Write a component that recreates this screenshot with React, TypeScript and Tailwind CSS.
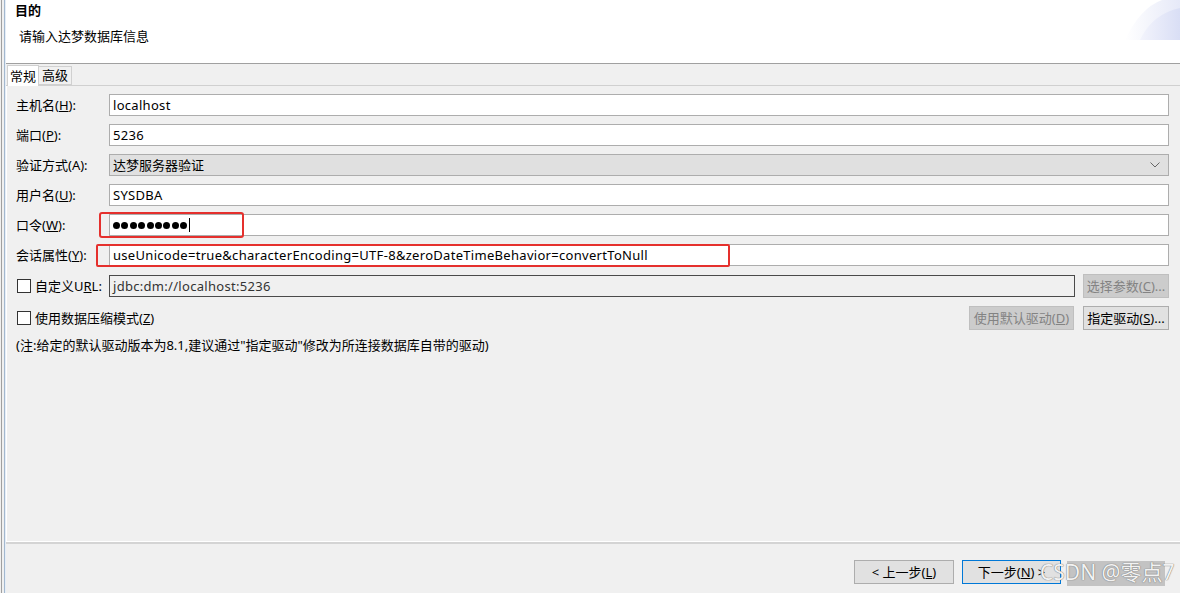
import { type ReactNode } from 'react';

function Field({ children, className = 'bg-white' }: { children?: ReactNode; className?: string }) {
    return (
        <div className={`flex h-[22px] flex-1 items-center border border-[#adadad] px-[3px] tracking-[0.3px] ${className}`}>
            {children}
        </div>
    );
}

function Row({ label, children }: { label: ReactNode; children: ReactNode }) {
    return (
        <div className="flex h-[22px] items-center">
            <div className="w-[94px] shrink-0 pl-px">{label}</div>
            {children}
        </div>
    );
}

function Checkbox() {
    return <div className="h-[14px] w-[14px] shrink-0 border border-[#333] bg-white" />;
}

export default function App() {
    return (
        <div className="relative flex h-[593px] w-[1180px] overflow-hidden bg-[#f0f0f0] font-['Noto_Sans','Noto_Sans_CJK_SC',sans-serif] text-[13px] leading-none text-black">
            {/* window frame on the left */}
            <div className="flex w-[6px] shrink-0">
                <div className="w-px bg-[#f0f0f0]" />
                <div className="w-px bg-[#a0a0a0]" />
                <div className="w-[2px] bg-[#f0f0f0]" />
                <div className="w-px bg-[#a3b8cf]" />
                <div className="w-px bg-[#e6eef7]" />
            </div>

            <div className="flex min-w-0 flex-1 flex-col">
                {/* Header */}
                <div className="relative h-[64px] shrink-0 border-b border-[#a0a0a0] bg-white">
                    <div className="pl-[9px] pt-[3px] font-bold leading-[14px]">目的</div>
                    <div className="pl-[13px] pt-[12px] leading-[14px]">请输入达梦数据库信息</div>
                    <svg className="absolute right-0 top-0" width="58" height="42" viewBox="0 0 58 42">
                        <defs>
                            <linearGradient id="g1" x1="0" y1="0" x2="1" y2="0">
                                <stop offset="0" stopColor="#ffffff" />
                                <stop offset="1" stopColor="#e6e9f8" />
                            </linearGradient>
                            <linearGradient id="g2" x1="0" y1="0" x2="1" y2="0">
                                <stop offset="0" stopColor="#f3f4fc" />
                                <stop offset="1" stopColor="#d9def5" />
                            </linearGradient>
                        </defs>
                        <path d="M3 40 Q18 8 40 0 L58 0 L58 40 Z" fill="url(#g1)" />
                        <path d="M18 40 Q30 14 58 8 L58 40 Z" fill="url(#g2)" />
                    </svg>
                </div>

                {/* Tabs */}
                <div className="flex h-[22px] shrink-0 items-end border-b border-[#d0d0d0] pl-px">
                    <div className="mb-[-1px] flex h-[21px] items-center border border-b-0 border-[#d0d0d0] bg-white px-[2px]">常规</div>
                    <div className="flex h-[19px] items-center border border-l-0 border-[#d0d0d0] bg-[#f0f0f0] px-[3px]">高级</div>
                </div>

                {/* Form */}
                <div className="flex flex-1 flex-col gap-[8px] border-l border-white pl-[8px] pr-[11px] pt-[8px]">
                    <Row label={<>主机名(<u>H</u>):</>}>
                        <Field>localhost</Field>
                    </Row>
                    <Row label={<>端口(<u>P</u>):</>}>
                        <Field>5236</Field>
                    </Row>
                    <Row label={<>验证方式(A):</>}>
                        <Field className="justify-between bg-[#e0e0e0] pr-[8px] tracking-normal">
                            <span>达梦服务器验证</span>
                            <svg width="10" height="6" viewBox="0 0 10 6">
                                <path d="M0.5 0.5 L5 5 L9.5 0.5" fill="none" stroke="#666" strokeWidth="1" />
                            </svg>
                        </Field>
                    </Row>
                    <Row label={<>用户名(<u>U</u>):</>}>
                        <Field>SYSDBA</Field>
                    </Row>
                    <Row label={<>口令(<u>W</u>):</>}>
                        <Field className="border-[#0078d7] bg-white">
                            <div className="flex items-center gap-[1.4px]">
                                {Array.from({ length: 9 }).map((_, i) => (
                                    <span key={i} className="h-[7px] w-[7px] rounded-full bg-black" />
                                ))}
                            </div>
                            <span className="ml-[2px] h-[14px] w-px bg-black" />
                        </Field>
                    </Row>
                    <Row label={<>会话属性(<u>Y</u>):</>}>
                        <Field>useUnicode=true&amp;characterEncoding=UTF-8&amp;zeroDateTimeBehavior=convertToNull</Field>
                    </Row>

                    <div className="flex h-[24px] items-center">
                        <div className="flex w-[94px] shrink-0 items-center gap-[4px] pl-[2px]">
                            <Checkbox />
                            <span>
                                自定义U<u>R</u>L:
                            </span>
                        </div>
                        <div className="flex h-[22px] flex-1 items-center border border-[#4a4a4a] bg-[#f0f0f0] px-[3px] tracking-[0.3px] text-[#333]">
                            jdbc:dm://localhost:5236
                        </div>
                        <button className="ml-[8px] flex h-[24px] w-[86px] items-center justify-center border border-[#bfbfbf] bg-[#cccccc] text-[#838383]">
                            选择参数(<u>C</u>)...
                        </button>
                    </div>

                    <div className="flex h-[24px] items-center">
                        <div className="flex flex-1 items-center gap-[4px] pl-[2px]">
                            <Checkbox />
                            <span>
                                使用数据压缩模式(<u>Z</u>)
                            </span>
                        </div>
                        <button className="flex h-[24px] w-[105px] items-center justify-center border border-[#bfbfbf] bg-[#cccccc] text-[#838383]">
                            使用默认驱动(<u>D</u>)
                        </button>
                        <button className="ml-[9px] flex h-[24px] w-[86px] items-center justify-center border border-[#adadad] bg-[#e1e1e1]">
                            指定驱动(<u>S</u>)...
                        </button>
                    </div>

                    <div className="-mt-[3px] h-[24px] pl-px leading-[20px]">
                        {'(注:给定的默认驱动版本为8.1,建议通过"指定驱动"修改为所连接数据库自带的驱动)'}
                    </div>
                </div>

                {/* Bottom separator */}
                <div className="h-px shrink-0 bg-white" />
                <div className="h-[2px] shrink-0 bg-[#d4d4d4]" />

                {/* Buttons */}
                <div className="flex h-[49px] shrink-0 items-start gap-[8px] pl-[848px] pt-[16px]">
                    <button className="flex h-[24px] w-[100px] items-center justify-center border border-[#adadad] bg-[#e1e1e1]">
                        &lt; 上一步(<u>L</u>)
                    </button>
                    <button className="flex h-[24px] w-[99px] items-center justify-center border border-[#0078d7] bg-[#e1e1e1]">
                        下一步(<u>N</u>) &gt;
                    </button>
                </div>
            </div>

            {/* annotations */}
            <div className="absolute left-[99px] top-[212px] h-[26px] w-[145px] rounded-[3px] border-2 border-[#e5302d]" />
            <div className="absolute left-[96px] top-[244px] h-[23px] w-[634px] rounded-[2px] border-2 border-[#e5302d]" />

            {/* watermark */}
            <div className="absolute left-[1067px] top-[561px] h-[25px] w-[98px] bg-[#b8b8b8]/80" />
            <div className="absolute left-[1040px] top-[559px] text-[21px] leading-[26px] text-[#f2f2f2] [text-shadow:0_0_1px_#777,0_0_1px_#777]">
                CSDN @零点7
            </div>
        </div>
    );
}
